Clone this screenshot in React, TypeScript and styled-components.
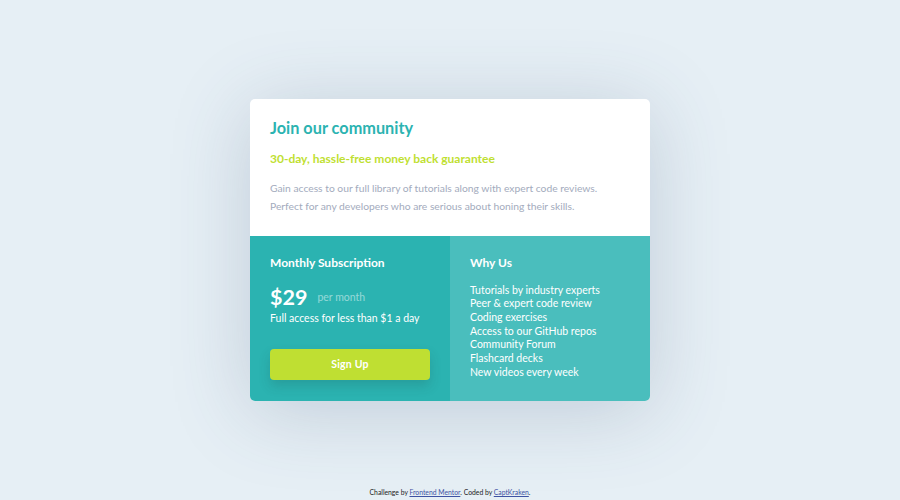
import styled, { createGlobalStyle } from "styled-components";

const GlobalStyle = createGlobalStyle`
  * { box-sizing: border-box; }
  body {
    margin: 0;
    background: #e6eff5;
    font-family: Lato, "Noto Sans", sans-serif;
  }
`;

const Page = styled.div`
  min-height: 500px;
  padding-top: 15px;
  display: flex;
  flex-direction: column;
  align-items: center;
`;

const Main = styled.main`
  flex: 1;
  display: flex;
  align-items: center;
  justify-content: center;
  width: 100%;
`;

const Card = styled.section`
  width: 400px;
  border-radius: 5px;
  overflow: hidden;
  background: #fff;
  box-shadow: 0 10px 80px rgba(60, 80, 120, 0.22);
`;

const Top = styled.div`
  padding: 19px 20px 21px;
`;

const Title = styled.h1`
  margin: 0;
  color: #2bb3b1;
  font-size: 16.3px;
  font-weight: 700;
  line-height: 20px;
`;

const Guarantee = styled.h2`
  margin: 12px 0 0;
  color: #bfdf32;
  font-size: 12px;
  font-weight: 700;
  line-height: 18px;
`;

const Text = styled.p`
  margin: 11px 0 0;
  color: #a3abbd;
  font-size: 10.3px;
  line-height: 18px;
`;

const Bottom = styled.div`
  display: grid;
  grid-template-columns: 1fr 1fr;
`;

const Col = styled.div<{ $light?: boolean }>`
  padding: 19px 20px 21px;
  background: ${(p) => (p.$light ? "#4abebd" : "#2bb3b1")};
  color: #fff;
`;

const ColTitle = styled.h3`
  margin: 0;
  font-size: 12px;
  font-weight: 700;
  line-height: 16px;
`;

const PriceRow = styled.div`
  display: flex;
  align-items: center;
  gap: 10px;
  margin-top: 14px;
`;

const Price = styled.span`
  font-size: 21.5px;
  font-weight: 700;
  line-height: 24px;
`;

const Per = styled.span`
  font-size: 10.5px;
  color: rgba(255, 255, 255, 0.5);
`;

const Access = styled.p`
  margin: 1px 0 0;
  font-size: 10.5px;
  line-height: 16px;
`;

const Button = styled.button`
  display: block;
  width: 100%;
  height: 31px;
  margin-top: 23px;
  border: 0;
  border-radius: 4px;
  background: #bfdf32;
  color: #fff;
  font-family: inherit;
  font-size: 10.5px;
  font-weight: 700;
  letter-spacing: 0.2px;
  box-shadow: 0 6px 12px rgba(30, 60, 60, 0.18);
  cursor: pointer;
`;

const List = styled.ul`
  list-style: none;
  margin: 13px 0 0;
  padding: 0;
  font-size: 10.5px;
  line-height: 13.7px;
`;

const Footer = styled.footer`
  padding: 4px 0 4px;
  font-size: 6.8px;
  color: #222;
  text-align: center;

  a { color: #3e52a3; }
`;

const perks = [
  "Tutorials by industry experts",
  "Peer & expert code review",
  "Coding exercises",
  "Access to our GitHub repos",
  "Community Forum",
  "Flashcard decks",
  "New videos every week",
];

export default function App() {
  return (
    <Page>
      <GlobalStyle />
      <Main>
        <Card>
          <Top>
            <Title>Join our community</Title>
            <Guarantee>30-day, hassle-free money back guarantee</Guarantee>
            <Text>
              Gain access to our full library of tutorials along with expert code reviews.
              <br />
              Perfect for any developers who are serious about honing their skills.
            </Text>
          </Top>
          <Bottom>
            <Col>
              <ColTitle>Monthly Subscription</ColTitle>
              <PriceRow>
                <Price>$29</Price>
                <Per>per month</Per>
              </PriceRow>
              <Access>Full access for less than $1 a day</Access>
              <Button>Sign Up</Button>
            </Col>
            <Col $light>
              <ColTitle>Why Us</ColTitle>
              <List>
                {perks.map((p) => (
                  <li key={p}>{p}</li>
                ))}
              </List>
            </Col>
          </Bottom>
        </Card>
      </Main>
      <Footer>
        Challenge by <a href="#">Frontend Mentor</a>. Coded by <a href="#">CaptKraken</a>.
      </Footer>
    </Page>
  );
}
